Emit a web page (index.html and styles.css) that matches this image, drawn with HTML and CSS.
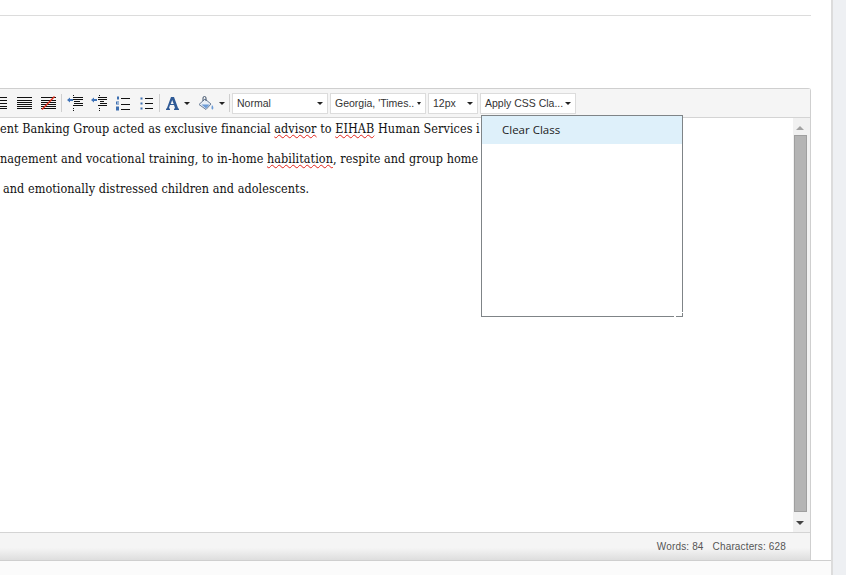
FILE: index.html
```html
<!DOCTYPE html>
<html lang="en">
<head>
<meta charset="utf-8">
<title>Editor</title>
<link rel="stylesheet" href="styles.css">
</head>
<body>
<div class="page">
  <main class="main">
    <div class="rule"></div>
    <section class="editor">
      <div class="toolbar">
        <span class="btn first"><svg width="14" height="14" viewBox="0 0 14 14"><path class="ink" d="M0 1.500h14M0 4.500h14M0 7.500h14M0 10.500h14M0 12.500h14"/></svg></span>
        <span class="btn"><svg width="15" height="14" viewBox="0 0 15 14"><path class="ink" d="M0 1.500h15M0 4.500h15M0 6.500h15M0 8.500h15M0 10.500h15M0 12.500h15"/></svg></span>
        <span class="btn"><svg width="15" height="14" viewBox="0 0 15 14"><path class="ink" d="M0 1.500h15M0 4.500h15M0 6.500h15M0 8.500h15M0 10.500h15M0 12.500h15"/><path class="strike" d="M1 13.500 13.500 .5"/></svg></span>
        <span class="sep"></span>
        <span class="btn"><svg width="16" height="16" viewBox="0 0 16 16"><path class="ink" d="M6 .5h1M6 2.500h10M6 4.500h10M7 6.500h6M7 8.500h9M6 10.500h10M6 13.500h1M6 15.500h1"/><path class="blue" d="M0 5 3 2.500V4h3v2H3v1.500z"/></svg></span>
        <span class="btn"><svg width="16" height="16" viewBox="0 0 16 16"><path class="ink" d="M8 .5h1M7 2.500h9M7 4.500h9M9 6.500h4M9 8.500h7M7 10.500h9M8 13.500h1M8 15.500h1"/><path class="blue" d="M0 5 3 2.500V4h3v2H3v1.500z"/></svg></span>
        <span class="btn"><svg width="15" height="15" viewBox="0 0 15 15"><path class="ink" d="M5 2.500h9M5 8.500h9M5 13.500h9"/><path class="bluebar" d="M1 .5h2v3H1zM0 5.500h3v1H1v1h2v1H0zM0 10.500h3v4H0z"/></svg></span>
        <span class="btn"><svg width="14" height="14" viewBox="0 0 14 14"><path class="ink" d="M5 2.500h8M5 7.500h8M5 12.500h8"/><path class="bluebar" d="M.5 1.500h2v2h-2zM.5 6.500h2v2h-2zM.5 11.500h2v2h-2z"/></svg></span>
        <span class="sep second"></span>
        <span class="iconbtn"><svg width="13" height="13" viewBox="0 0 13 13"><path class="letter" d="M5 0h3l4 11 1 1v1H8v-1l1-1-1-3H4l-1 3 1 1v1H0v-1l1-1zM6.200 3 4.700 7h3z"/></svg><i class="caret"></i></span>
        <span class="iconbtn"><svg width="16" height="15" viewBox="0 0 16 15"><path class="bucket" d="M1 8.500 7 3l6 5-5 5.500z"/><path class="paint" d="M3.500 8.500h8L8 12.500zM14 9c2 2 1.500 4.500 .5 4.500S13 12 14 9z"/><path class="handle" d="M5 5V2q0-1.500 1.500-1.500T8 2v3"/></svg><i class="caret"></i></span>
        <span class="sep third"></span>
        <span class="select s-normal"><span class="label">Normal</span><i class="caret"></i></span>
        <span class="select s-font"><span class="label">Georgia, 'Times..</span><i class="caret tiny"></i></span>
        <span class="select s-size"><span class="label">12px</span><i class="caret"></i></span>
        <span class="select s-class"><span class="label">Apply CSS Cla...</span><i class="caret"></i></span>
      </div>
      <div class="content">
        <div class="text">
          <p>ent Banking Group acted as exclusive financial <u>advisor</u> to <u>EIHAB</u> Human Services i</p>
          <p>nagement and vocational training, to in-home <u>habilitation</u>, respite and group home</p>
          <p class="lead">and emotionally distressed children and adolescents.</p>
        </div>
        <div class="scrollbar">
          <i class="arrow up"></i>
          <div class="thumb"></div>
          <i class="arrow down"></i>
        </div>
      </div>
      <div class="status"><span>Words: 84</span><span>Characters: 628</span></div>
      <div class="menu">
        <div class="menu-item">Clear Class</div>
        <i class="grip"></i>
      </div>
    </section>
    <div class="foot"></div>
  </main>
  <aside class="rail"></aside>
</div>
</body>
</html>
```
FILE: styles.css
```css
* { box-sizing: border-box; }
html, body { margin: 0; height: 100%; overflow: hidden; background: #fff; }
.page { display: flex; height: 575px; font-family: "Liberation Sans", Arial, sans-serif; }
.main { width: 831px; flex: none; display: flex; flex-direction: column; }
.rail { flex: 1; background: #eef0f3; border-left: 2px solid #dcdcdc; }
.rule { height: 1px; margin-top: 15px; width: 811px; background: #dcdcdc; flex: none; }
.editor { position: relative; width: 811px; height: 472px; margin-top: 72px; flex: none; border: 1px solid #cfcfcf; border-width: 1px 1px 0 0; border-top-right-radius: 3px; display: flex; flex-direction: column; overflow: visible; }
.toolbar { height: 29px; flex: none; display: flex; align-items: center; background: #f5f5f5; border-bottom: 1px solid #d4d4d4; overflow: hidden; }
.btn { width: 24px; flex: none; display: flex; justify-content: center; }
.first { margin-left: -12px; }
.sep { width: 1px; height: 18px; background: #cfcfcf; flex: none; margin: 0 1px; }
.sep.second { margin: 0 3px 0 0; }
.sep.third { margin: 0 2px 0 4px; }
.iconbtn { display: flex; align-items: center; flex: none; padding-left: 3px; }
.iconbtn svg { margin-right: 5px; }
.iconbtn + .iconbtn { margin-left: 8px; padding-left: 0; }
.ink { stroke: #111; stroke-width: 1; fill: none; }
.strike { stroke: #e0301e; stroke-width: 1.400; fill: none; }
.blue { fill: #3f73b8; }
.bluebar { fill: #3c6eb0; }
.letter { fill: #2f5a96; }
.bucket { fill: #e8eef6; stroke: #6c7f99; stroke-width: 1; }
.paint { fill: #6c9bd6; }
.handle { stroke: #44566e; stroke-width: 1; fill: none; }
.caret { display: block; width: 0; height: 0; border-left: 3px solid transparent; border-right: 3px solid transparent; border-top: 3px solid #222; flex: none; }
.caret.tiny { border-left-width: 2px; border-right-width: 2px; }
.select { height: 21px; flex: none; display: flex; align-items: center; justify-content: space-between; background: #fff; border: 1px solid #dcdcdc; margin-right: 2px; padding: 0 4px; font-size: 10.500px; color: #333; white-space: nowrap; }
.s-normal { width: 96px; }
.s-font { width: 96px; }
.s-size { width: 50px; }
.s-class { width: 96px; }
.s-class .caret { margin-left: 1px; }
.content { flex: 1; min-height: 0; display: flex; background: #fff; }
.text { flex: 1; min-width: 0; overflow: hidden; padding-top: 2px; font-family: "DejaVu Serif Condensed", "DejaVu Serif", serif; font-stretch: condensed; font-size: 12.500px; letter-spacing: .06px; color: #111; }
.text p { margin: 0; height: 30px; line-height: 17px; white-space: nowrap; }
.text p.lead { padding-left: 3px; }
.text u { text-decoration: underline wavy #e2231a 1px; text-underline-offset: 1px; }
.scrollbar { width: 17px; flex: none; background: #f1f1f1; display: flex; flex-direction: column; align-items: center; padding: 0 3px 0 0; }
.arrow { display: block; width: 0; height: 0; border-left: 4px solid transparent; border-right: 4px solid transparent; flex: none; }
.arrow.up { border-bottom: 4px solid #a3a3a3; margin-top: 8px; }
.arrow.down { border-top: 4px solid #444; margin-bottom: 7px; }
.thumb { flex: 1; width: 13px; background: #b4b4b4; border: 1px solid #9f9f9f; margin: 5px 0 9px; }
.status { height: 28px; flex: none; display: flex; justify-content: flex-end; align-items: center; gap: 9px; padding: 0 24px 0 0; font-size: 10px; letter-spacing: .15px; color: #555; border-top: 1px solid #d4d4d4; background: linear-gradient(#f5f5f5 55%, #dedede); }
.menu { position: absolute; left: 481px; top: 26px; width: 202px; height: 202px; background: #fff; border: 1px solid #7f8487; font-family: "Open Sans", sans-serif; font-size: 11.500px; }
.menu-item { height: 28px; line-height: 27px; padding-left: 20px; background: #def0fa; color: #222; }
.grip { position: absolute; right: -1px; bottom: -1px; width: 7px; height: 4px; border-right: 1px solid #7f8487; border-bottom: 1px solid #7f8487; box-shadow: -2px 0 0 #fff, 0 -1px 0 #fff; }
.foot { flex: 1; border-top: 1px solid #cfcfcf; background: #fbfbfb; }
```
